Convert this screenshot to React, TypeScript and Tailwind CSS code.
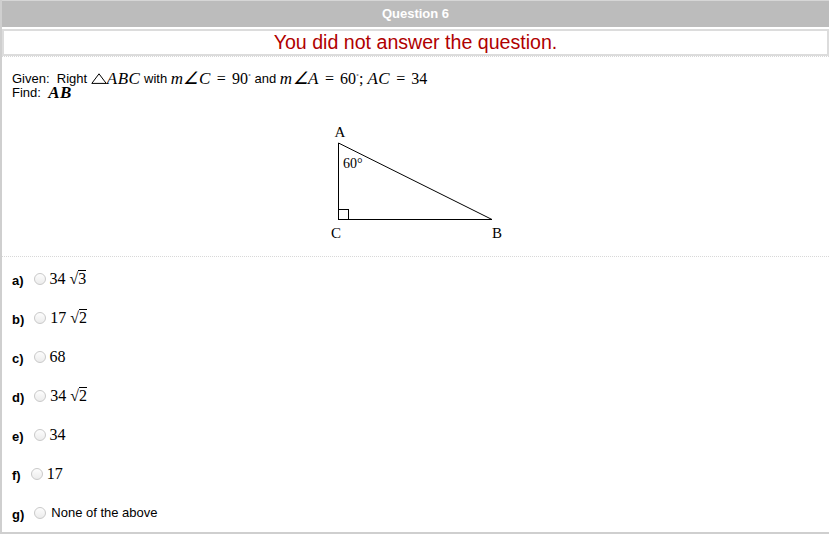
const options = [
  { key: 'a)', value: '34', root: '3' },
  { key: 'b)', value: '17', root: '2' },
  { key: 'c)', value: '68' },
  { key: 'd)', value: '34', root: '2' },
  { key: 'e)', value: '34' },
  { key: 'f)', value: '17' },
  { key: 'g)', text: 'None of the above' },
]

function Sqrt({ n }: { n: string }) {
  return (
    <span className="ml-[4px] inline-flex items-start">
      <span>√</span>
      <span className="border-t border-black leading-[16px]">{n}</span>
    </span>
  )
}

function Radio() {
  return (
    <span className="ml-[10px] inline-block h-[12px] w-[12px] shrink-0 rounded-full border border-[#c9c9c9] bg-gradient-to-b from-[#fdfdfd] to-[#ececec]" />
  )
}

function Triangle() {
  return (
    <svg width="200" height="125" viewBox="0 0 200 125" className="ml-[308px] block">
      <g fontFamily="'Liberation Serif', serif" fontSize="15" fill="#000">
        <text x="20" y="18" textAnchor="middle">A</text>
        <text x="16" y="119" textAnchor="middle">C</text>
        <text x="177" y="119" textAnchor="middle">B</text>
        <text x="23" y="49" fontSize="14">60°</text>
      </g>
      <path d="M18.5 24 L18.5 100.5 L172 100.5 Z" fill="none" stroke="#000" strokeWidth="1" />
      <rect x="18.5" y="90.5" width="10" height="10" fill="none" stroke="#000" strokeWidth="1" />
    </svg>
  )
}

const math = "font-['Liberation_Serif',serif] italic text-[17px] tracking-[0.5px]"
const roman = "font-['Liberation_Serif',serif] text-[16px]"

function Eq() {
  return <span className={`${roman} px-[6px]`}>=</span>
}

export default function App() {
  return (
    <div className="h-[535px] w-[829px] overflow-hidden bg-white font-['Liberation_Sans',Arial,sans-serif] text-[13px] text-black">
      <div className="flex h-[534px] flex-col border-b-2 border-l-2 border-[#cfcfcf]">
        <div className="border-t border-[#d6d6d6] bg-[#bcbcbc]">
          <div className="flex h-[26px] items-center justify-center font-bold text-white">Question 6</div>
        </div>
        <div className="mt-[2px] flex h-[27px] items-center justify-center border-2 border-[#dcdcdc] text-[19.6px] text-[#b00000]">
          You did not answer the question.
        </div>
        <div className="border-b border-dotted border-[#d8d8d8]" />

        <div className="flex h-[202px] flex-col border-b border-dotted border-[#d8d8d8] pl-[10px] pt-[14px]">
          <div className="flex h-[14px] items-end leading-[13px] whitespace-pre">
            <span>Given:  Right </span>
            <svg width="16" height="11" viewBox="0 0 16 11" className="mb-[1px]">
              <path d="M8 0.8 L15.2 10.4 L0.8 10.4 Z" fill="none" stroke="#000" strokeWidth="1" />
            </svg>
            <span className={math}>ABC</span>
            <span> with </span>
            <span className={math}>m∠C</span>
            <Eq />
            <span className={roman}>90<sup className="text-[9px]">˚</sup></span>
            <span> and </span>
            <span className={math}>m∠A</span>
            <Eq />
            <span className={roman}>60<sup className="text-[9px]">˚</sup>; </span>
            <span className={math}>AC</span>
            <Eq />
            <span className={roman}>34</span>
          </div>
          <div className="flex h-[14px] items-end leading-[13px] whitespace-pre">
            <span>Find:  </span>
            <span className={`${math} font-bold`}>AB</span>
          </div>
          <div className="mt-[20px]">
            <Triangle />
          </div>
        </div>

        <div className="flex flex-col pl-[10px] pt-[2px]">
          {options.map((o) => (
            <div key={o.key} className="flex h-[39px] items-center">
              <span className="mt-[4px] font-bold">{o.key}</span>
              <Radio />
              {o.text ? (
                <span className="ml-[5px]">{o.text}</span>
              ) : (
                <span className="ml-[4px] flex items-start font-['Liberation_Serif',serif] text-[16px] leading-[18px]">
                  {o.value}
                  {o.root && <Sqrt n={o.root} />}
                </span>
              )}
            </div>
          ))}
        </div>
      </div>
    </div>
  )
}
